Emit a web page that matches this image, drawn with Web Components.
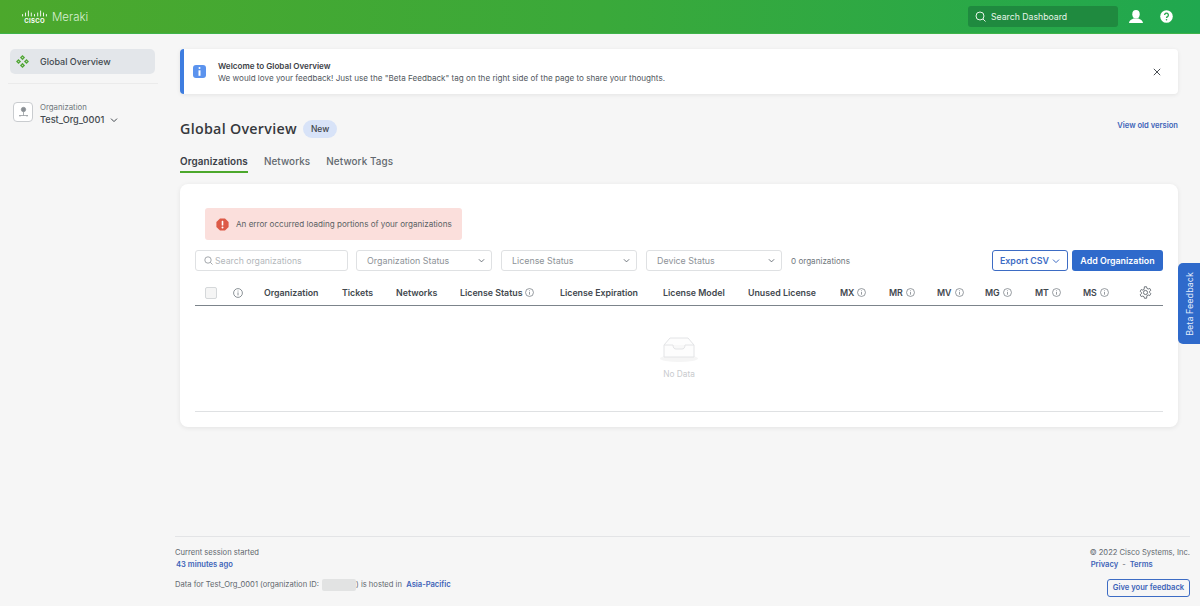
<!DOCTYPE html>
<html lang="en">
<head>
<meta charset="utf-8">
<title>Global Overview</title>
<style>
  html, body { margin: 0; height: 100%; }
  body { background: #f6f6f6; font-family: Inter, "Liberation Sans", sans-serif; color: #3f454b; overflow: hidden; }
</style>
</head>
<body>
<mk-app>
  <mk-header slot="header"></mk-header>
  <mk-sidebar slot="sidebar"></mk-sidebar>
  <mk-banner>
    <b slot="title">Welcome to Global Overview</b>
    We would love your feedback! Just use the "Beta Feedback" tag on the right side of the page to share your thoughts.
  </mk-banner>
  <mk-title></mk-title>
  <mk-tabs></mk-tabs>
  <mk-org-card></mk-org-card>
  <mk-footer slot="footer"></mk-footer>
  <mk-beta slot="overlay"></mk-beta>
</mk-app>

<script>
const infoIcon = (s = 9) => `<svg width="${s}" height="${s}" viewBox="0 0 10 10" fill="none" stroke="#6f777e" stroke-width=".8" style="flex:none"><circle cx="5" cy="5" r="4.4"/><path d="M5 4.4v3M5 2.6v.9"/></svg>`;
const chevron = (c = '#5d646b', s = 8) => `<svg width="${s}" height="${s}" viewBox="0 0 8 8" fill="none" stroke="${c}" stroke-width="1" style="flex:none"><path d="M1 2.6l3 3 3-3"/></svg>`;

// small helper so each element only declares its html
function define(name, html) {
  customElements.define(name, class extends HTMLElement {
    constructor() {
      super();
      this.attachShadow({ mode: 'open' }).innerHTML = html;
    }
  });
}

define('mk-app', `
  <style>
    :host { display: grid; grid-template-columns: 175px 1fr; grid-template-rows: 34px 1fr; height: 100vh; position: relative; }
    .head { grid-column: 1 / 3; }
    .content { display: flex; flex-direction: column; min-width: 0; }
    .main { padding: 15px 22px 0 5px; flex: 1; display: flex; flex-direction: column; }
  </style>
  <div class="head"><slot name="header"></slot></div>
  <slot name="sidebar"></slot>
  <div class="content">
    <div class="main"><slot></slot></div>
    <slot name="footer"></slot>
  </div>
  <slot name="overlay"></slot>
`);

define('mk-header', `
  <style>
    :host { display: flex; align-items: center; height: 34px; box-sizing: border-box; background: linear-gradient(90deg, #4ca82c 0%, #3aa93a 50%, #20a84f 100%); border-bottom: 1px solid #3fb34a; color: #fff; padding: 0 27px 0 22px; }
    .logo { display: flex; align-items: center; gap: 5px; }
    .cisco { display: flex; flex-direction: column; align-items: center; width: 25px; }
    .cisco span { font: 700 6px/7px Inter, sans-serif; letter-spacing: .3px; color: #fff; }
    .meraki { font: 300 11.500px/16px Inter, sans-serif; color: #d9efd3; }
    .search { margin-left: auto; width: 150px; height: 21px; box-sizing: border-box; background: #1f8a3f; border-radius: 3px; display: flex; align-items: center; gap: 5px; padding-left: 7px; font-size: 8.700px; color: #e8f5ea; }
    .user { margin-left: 11px; margin-right: 17px; display: flex; }
    .help { display: flex; }
  </style>
  <div class="logo">
    <div class="cisco">
      <svg width="25" height="7" viewBox="0 0 25 7" stroke="#fff" stroke-width=".9" stroke-linecap="round"><path d="M.6 4.500v1.500M3.500 3v3M6.400 1v5M9.300 3v3M12.500 4.500v1.500M15.700 3v3M18.600 1v5M21.500 3v3M24.400 4.500v1.500"/></svg>
      <span>CISCO</span>
    </div>
    <div class="meraki">Meraki</div>
  </div>
  <div class="search">
    <svg width="11" height="11" viewBox="0 0 11 11" fill="none" stroke="#e8f5ea" stroke-width="1"><circle cx="5" cy="5" r="4"/><path d="M8 8l2.500 2.500"/></svg>
    Search Dashboard
  </div>
  <div class="user"><svg width="14" height="13" viewBox="0 0 14 13" fill="#fff"><ellipse cx="7" cy="4.200" rx="3.700" ry="4.200"/><path d="M0 13c.3-3 3-3.500 4.500-4.500h5C11 9.500 13.700 10 14 13z"/></svg></div>
  <div class="help"><svg width="13" height="13" viewBox="0 0 13 13"><circle cx="6.500" cy="6.500" r="6.300" fill="#fff"/><path d="M4.600 5a1.900 1.900 0 1 1 2.900 1.600c-.7.400-1 .7-1 1.400" fill="none" stroke="#25a84c" stroke-width="1.300"/><circle cx="6.500" cy="9.800" r=".8" fill="#25a84c"/></svg></div>
`);

define('mk-sidebar', `
  <style>
    :host { display: block; padding: 15px 20px 0 10px; }
    .nav { display: flex; align-items: center; height: 25px; background: #e3e6ea; border-radius: 5px; padding-left: 6px; gap: 11px; font-size: 9px; font-weight: 500; color: #42484e; }
    hr { border: 0; border-top: 1px solid #ebebeb; margin: 9px -3px 18px -2px; }
    .org { display: flex; padding-left: 3px; gap: 7px; }
    .box { width: 18px; height: 18px; border: 1px solid #c9cccf; border-radius: 4px; background: #fff; display: flex; align-items: center; justify-content: center; }
    .lbl { font-size: 7.800px; line-height: 10px; color: #6f767c; }
    .val { font-size: 9.200px; line-height: 12px; font-weight: 500; color: #42484e; display: flex; align-items: center; gap: 6px; margin-top: 2px; }
  </style>
  <div class="nav">
    <svg width="13" height="13" viewBox="0 0 13 13" fill="none" stroke="#55a83a" stroke-width="1.400"><path d="M6.500 1l1.600 1.600-1.600 1.600-1.600-1.600zM2.500 5l1.600 1.500-1.600 1.500L.9 6.500zM10.500 5l1.600 1.500-1.600 1.500-1.600-1.500zM6.500 8.800l1.600 1.600-1.600 1.600-1.600-1.600z"/></svg>
    Global Overview
  </div>
  <hr>
  <div class="org">
    <div class="box"><svg width="13" height="13" viewBox="0 0 13 13" fill="none" stroke="#8a8f94" stroke-width=".7"><circle cx="6.500" cy="3.500" r="2.200" fill="#8a8f94"/><path d="M6.500 5.500v4M2 9.500h9M3 9.500v1.200M10 9.500v1.200"/></svg></div>
    <div>
      <div class="lbl">Organization</div>
      <div class="val">Test_Org_0001 ${chevron('#42484e', 8)}</div>
    </div>
  </div>
`);

define('mk-banner', `
  <style>
    :host { display: flex; align-items: center; height: 45px; box-sizing: border-box; background: #fff; border-left: 4px solid #3e7de0; border-radius: 4px; box-shadow: 0 1px 4px rgba(0,0,0,.08); padding: 0 17px 0 9px; font-size: 8.100px; color: #52585e; flex: none; }
    .i { width: 13px; height: 13px; flex: none; background: #5b93ee; border-radius: 3px; color: #fff; display: flex; align-items: center; justify-content: center; margin-right: 12px; }
    .txt { line-height: 12px; }
    ::slotted(b) { display: block; font-weight: 600; color: #3b4046; }
    .x { margin-left: auto; display: flex; }
  </style>
  <div class="i"><svg width="3" height="9" viewBox="0 0 3 9" fill="#fff"><rect x=".5" width="2" height="2" rx="1"/><rect x=".5" y="3.300" width="2" height="5.500"/></svg></div>
  <div class="txt"><slot name="title"></slot><slot></slot></div>
  <div class="x"><svg width="8" height="8" viewBox="0 0 8 8" stroke="#4a4f54" stroke-width="1"><path d="M.8.800l6.400 6.400M7.200.800L.8 7.200"/></svg></div>
`);

define('mk-title', `
  <style>
    :host { display: flex; align-items: center; height: 20px; margin-top: 25px; flex: none; }
    h1 { margin: 0; font: 600 14.250px/20px "Open Sans", Inter, sans-serif; letter-spacing: .3px; color: #36393d; }
    .new { margin-left: 6px; background: #d8e3f8; border-radius: 10px; height: 18px; padding: 0 8px; font-size: 8.500px; line-height: 18px; font-weight: 500; color: #3f454b; }
    a { margin-left: auto; margin-bottom: 7px; font-size: 7.600px; font-weight: 600; color: #3d63b8; }
  </style>
  <h1>Global Overview</h1><span class="new">New</span><a>View old version</a>
`);

define('mk-tabs', `
  <style>
    :host { display: flex; gap: 16px; margin-top: 10px; height: 25px; margin-bottom: 10px; font-size: 9.900px; font-weight: 500; color: #62686e; flex: none; }
    div { height: 24px; box-sizing: border-box; line-height: 24px; letter-spacing: .1px; }
    .on { font-weight: 600; color: #3b4046; border-bottom: 2px solid #4ca82c; }
  </style>
  <div class="on">Organizations</div><div>Networks</div><div>Network Tags</div>
`);

define('mk-select', `
  <style>
    :host { display: flex; align-items: center; justify-content: space-between; height: 21px; box-sizing: border-box; border: 1px solid #dfe1e3; border-radius: 3px; background: #fff; padding: 0 6px 0 10px; font-size: 8.900px; color: #8d9297; }
  </style>
  <slot></slot>${chevron('#5d646b', 7)}
`);

define('mk-org-card', `
  <style>
    :host { display: block; background: #fff; border-radius: 8px; box-shadow: 0 1px 5px rgba(0,0,0,.08); padding: 24px 15px 15px; height: 243px; box-sizing: border-box; flex: none; }
    .alert { margin-left: 10px; width: 257px; height: 32px; box-sizing: border-box; background: #fbdfdc; border-radius: 3px; display: flex; align-items: center; gap: 7px; padding-left: 11px; font-size: 8.100px; color: #5a5f64; white-space: nowrap; }
    .bar { display: flex; align-items: center; margin-top: 10px; height: 21px; font-size: 8.100px; }
    .search { width: 153px; height: 21px; box-sizing: border-box; border: 1px solid #dfe1e3; border-radius: 3px; display: flex; align-items: center; gap: 2px; padding-left: 8px; font-size: 8.700px; color: #b3b7bb; }
    mk-select { width: 136px; margin-left: 9px; }
    mk-select.first { margin-left: 8px; }
    .count { margin-left: 9px; color: #6f767c; }
    .btn { height: 21px; box-sizing: border-box; border-radius: 3px; font-size: 8.850px; font-weight: 600; display: flex; align-items: center; justify-content: center; gap: 3px; }
    .export { margin-left: auto; width: 76px; border: 1.500px solid #3d6cc4; color: #3d6cc4; }
    .add { margin-left: 4px; width: 91px; background: #2f6acb; color: #fff; }
    .thead { display: grid; grid-template-columns: 10px 28px 31px 78px 54px 64px 100px 103px 85px 92px 49px 48px 48px 50px 48px 56px 1fr; align-items: center; height: 26px; box-sizing: border-box; margin-top: 9px; border-bottom: 1.500px solid #7c848b; font-size: 8.800px; font-weight: 600; color: #42484e; }
    .thead > div { display: flex; align-items: center; gap: 3px; white-space: nowrap; }
    .check { width: 12px; height: 12px; box-sizing: border-box; border: 1px solid #d5d8da; background: #f5f5f5; border-radius: 2px; }
    .empty { height: 106px; box-sizing: border-box; border-bottom: 1px solid #dfe1e3; display: flex; flex-direction: column; align-items: center; padding-top: 31px; font-size: 8.300px; color: #c9cbce; }
    .empty span { margin-top: 7px; }
  </style>
  <div class="alert">
    <svg width="13" height="13" viewBox="0 0 13 13" style="flex:none"><path d="M4 .4h5L12.600 4v5L9 12.600H4L.4 9V4z" fill="#dd5a47"/><rect x="5.700" y="2.800" width="1.600" height="4.800" rx=".6" fill="#fff"/><circle cx="6.500" cy="9.500" r="1" fill="#fff"/></svg>
    An error occurred loading portions of your organizations
  </div>
  <div class="bar">
    <div class="search"><svg width="9" height="9" viewBox="0 0 9 9" fill="none" stroke="#8d9297" stroke-width=".8"><circle cx="4" cy="4" r="3.200"/><path d="M6.400 6.400L8.500 8.500"/></svg>Search organizations</div>
    <mk-select class="first">Organization Status</mk-select>
    <mk-select>License Status</mk-select>
    <mk-select>Device Status</mk-select>
    <span class="count">0 organizations</span>
    <div class="btn export">Export CSV ${chevron('#3d6cc4', 8)}</div>
    <div class="btn add">Add Organization</div>
  </div>
  <div class="thead">
    <div></div>
    <div><span class="check"></span></div>
    <div>${infoIcon(10)}</div>
    <div>Organization</div>
    <div>Tickets</div>
    <div>Networks</div>
    <div>License Status ${infoIcon()}</div>
    <div>License Expiration</div>
    <div>License Model</div>
    <div>Unused License</div>
    <div>MX ${infoIcon()}</div>
    <div>MR ${infoIcon()}</div>
    <div>MV ${infoIcon()}</div>
    <div>MG ${infoIcon()}</div>
    <div>MT ${infoIcon()}</div>
    <div>MS ${infoIcon()}</div>
    <div><svg width="13" height="13" viewBox="0 0 12 12" fill="none" stroke="#5d646b" stroke-width=".8"><circle cx="6" cy="6" r="1.900"/><path d="M5 .7h2l.3 1.500 1.200.6 1.400-.6 1 1.700-1.100 1 .1 1.200 1 1-1 1.700-1.400-.5-1.200.6L7 11.300H5l-.3-1.400-1.200-.6-1.400.5-1-1.700 1.100-1V5.900l-1.100-1 1-1.700 1.400.6 1.200-.6z"/></svg></div>
  </div>
  <div class="empty">
    <svg width="38" height="25" viewBox="0 0 38 25" fill="none"><ellipse cx="19" cy="21.500" rx="19" ry="3.500" fill="#f5f5f5"/><path d="M10 1h18l6 7v12H4V8z" fill="#fdfdfd" stroke="#e3e4e6"/><path d="M4 8h9c0 3 1.500 4 3 4h6c1.500 0 3-1 3-4h9" fill="#f8f8f8" stroke="#e3e4e6"/></svg>
    <span>No Data</span>
  </div>
`);

define('mk-footer', `
  <style>
    :host { display: flex; justify-content: space-between; height: 70px; box-sizing: border-box; margin-right: 10px; border-top: 1px solid #e3e4e6; padding-top: 10px; font-size: 7.600px; line-height: 12px; color: #62686e; }
    a { color: #3d63b8; font-weight: 600; }
    .sess { padding-left: 1px; }
    .data { margin-top: 8px; display: flex; align-items: center; white-space: pre; }
    .mask { display: inline-block; width: 34px; height: 12px; margin-left: 3px; background: #e2e3e3; border-radius: 2px; }
    .r { display: flex; flex-direction: column; }
    .links { display: flex; gap: 4px; padding-left: 1px; }
    .fb { margin-top: 8px; align-self: flex-end; width: 83px; height: 18px; box-sizing: border-box; border: 1.300px solid #3d6cc4; border-radius: 3px; display: flex; align-items: center; justify-content: center; font-weight: 600; color: #3d63b8; }
  </style>
  <div>
    <div>Current session started</div>
    <div class="sess"><a>43 minutes ago</a></div>
    <div class="data">Data for Test_Org_0001 (organization ID:<span class="mask"></span>) is hosted in  <a>Asia-Pacific</a></div>
  </div>
  <div class="r">
    <div>© 2022 Cisco Systems, Inc.</div>
    <div class="links"><a>Privacy</a><span>-</span><a>Terms</a></div>
    <div class="fb">Give your feedback</div>
  </div>
`);

define('mk-beta', `
  <style>
    :host { position: absolute; right: 0; top: 263px; width: 22px; height: 81px; background: #2f6acb; border-radius: 5px 0 0 5px; color: #e4edfb; display: flex; align-items: center; justify-content: center; }
    span { writing-mode: vertical-rl; transform: rotate(180deg); font-size: 8.900px; letter-spacing: .1px; white-space: nowrap; }
  </style>
  <span>Beta Feedback</span>
`);
</script>
</body>
</html>
